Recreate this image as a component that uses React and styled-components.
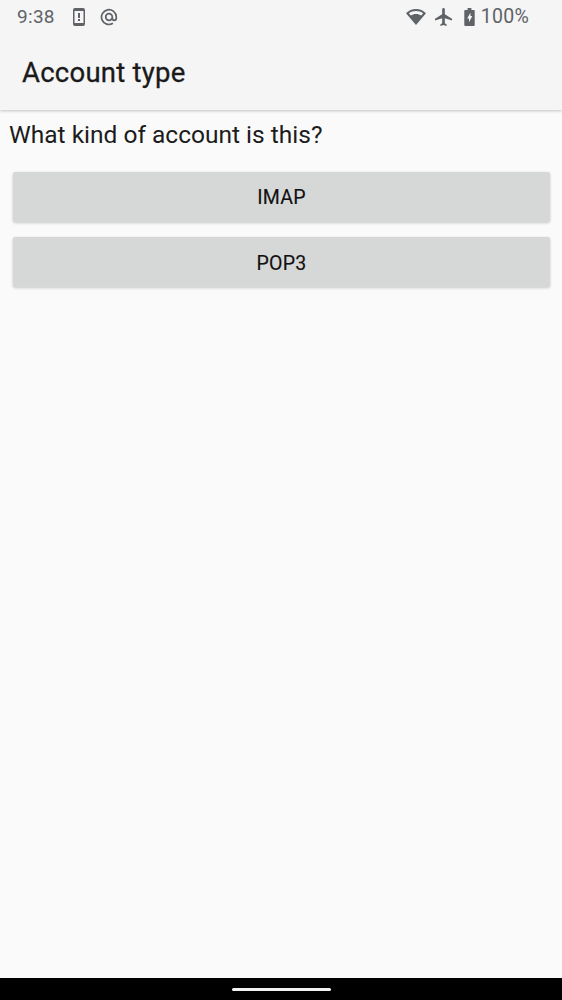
import React from 'react'
import styled, { createGlobalStyle } from 'styled-components'

const GlobalStyle = createGlobalStyle`
  html, body { margin: 0; padding: 0; background: #fafafa; }
  * { box-sizing: border-box; }
  body { font-family: Roboto, "Liberation Sans", sans-serif; }
`

const Phone = styled.div`
  width: 562px;
  height: 1000px;
  display: flex;
  flex-direction: column;
  background: #fafafa;
  overflow: hidden;
`

const Header = styled.header`
  height: 110px;
  flex: none;
  background: #f5f5f5;
  box-shadow: 0 1px 3px rgba(0, 0, 0, 0.22);
  position: relative;
`

const StatusBar = styled.div`
  height: 33px;
  display: flex;
  align-items: center;
  justify-content: space-between;
  padding: 0 33px 0 17px;
  color: #5f6368;
  font-size: 19px;
  letter-spacing: 0.3px;
`

const StatusGroup = styled.div`
  display: flex;
  align-items: center;
`

const Clock = styled.span`
  width: 55.5px;
  margin-top: -1px;
`

const Title = styled.h1`
  margin: 0;
  padding: 23px 0 0 22px;
  font-size: 27.5px;
  line-height: 34px;
  font-weight: 400;
  letter-spacing: 0.25px;
  -webkit-text-stroke: 0.3px #1a1a1a;
  color: #1a1a1a;
`

const Content = styled.main`
  flex: 1;
`

const Question = styled.p`
  margin: 0;
  padding: 10px 0 0 9px;
  font-size: 24.5px;
  line-height: 30px;
  font-weight: 400;
  color: #1c1c1c;
`

const Buttons = styled.div`
  display: flex;
  flex-direction: column;
  gap: 15.5px;
  padding: 21.5px 12px 0 13px;
`

const ActionButton = styled.button`
  height: 50px;
  border: 0;
  border-radius: 2px;
  background: #d6d7d7;
  box-shadow: 0 1px 3px rgba(0, 0, 0, 0.2);
  font-family: inherit;
  font-size: 19.5px;
  font-weight: 400;
  letter-spacing: 0.2px;
  -webkit-text-stroke: 0.15px #111;
  color: #111;
  padding: 2px 0 0;
`

const NavBar = styled.footer`
  height: 22px;
  flex: none;
  background: #000;
  display: flex;
  justify-content: center;
  padding-top: 10px;
`

const NavHandle = styled.div`
  width: 99px;
  height: 3px;
  border-radius: 2px;
  background: #f2f2f2;
`

const AlertPhoneIcon = styled.svg`
  width: 12px;
  height: 18px;
  fill: #5f6368;
`

const AtIcon = styled.svg`
  width: 18px;
  height: 18px;
  margin-left: 15px;
  fill: none;
  stroke: #5f6368;
  stroke-width: 1.7;
`

const RightIcon = styled.svg`
  width: ${p => p.$w}px;
  height: ${p => p.$h}px;
  margin-right: ${p => p.$gap}px;
  fill: #5f6368;
`

const Percent = styled.span`
  font-size: 19.5px;
`

export default function App() {
  return (
    <Phone>
      <GlobalStyle />
      <Header>
        <StatusBar>
          <StatusGroup>
            <Clock>9:38</Clock>
            <AlertPhoneIcon viewBox="0 0 12 18">
              <path fillRule="evenodd" d="M2 0h8a2 2 0 0 1 2 2v14a2 2 0 0 1-2 2H2a2 2 0 0 1-2-2V2a2 2 0 0 1 2-2zM1.500 3v12h9V3h-9zM5 5h2v5H5V5zm0 6h2v2H5v-2z" />
            </AlertPhoneIcon>
            <AtIcon viewBox="0 0 18 18">
              <path d="M12.300 9a3.300 3.300 0 1 1-6.600 0a3.300 3.300 0 0 1 6.600 0v1.300a2 2 0 0 0 4 0V9a7.400 7.400 0 1 0-3.400 6.300" />
            </AtIcon>
          </StatusGroup>
          <StatusGroup>
            <RightIcon $w={20} $h={16} $gap={9} viewBox="0 0 20 16">
              <path fillRule="evenodd" d="M10 16L0 4.200C2.600 1.600 6.100 0 10 0s7.400 1.600 10 4.200L10 16zM2.900 4.300l1.900 2.300C6.200 5.600 8 5 10 5s3.800.6 5.200 1.600l1.900-2.300C15.100 2.800 12.700 2 10 2S4.900 2.800 2.900 4.300z" />
            </RightIcon>
            <RightIcon $w={17} $h={18} $gap={12} viewBox="2 2 19 20">
              <path d="M21 16v-2l-8-5V3.500c0-.83-.67-1.500-1.500-1.500S10 2.670 10 3.500V9l-8 5v2l8-2.500V19l-2 1.500V22l3.500-1 3.500 1v-1.500L13 19v-5.500l8 2.500z" />
            </RightIcon>
            <RightIcon $w={11} $h={18} $gap={6} viewBox="0 0 11 19">
              <path fillRule="evenodd" d="M3.500 0h4v2H10a1 1 0 0 1 1 1v15a1 1 0 0 1-1 1H1a1 1 0 0 1-1-1V3a1 1 0 0 1 1-1h2.500V0zM6.500 5L3 11h2v4l3.500-6.500h-2V5z" />
            </RightIcon>
            <Percent>100%</Percent>
          </StatusGroup>
        </StatusBar>
        <Title>Account type</Title>
      </Header>
      <Content>
        <Question>What kind of account is this?</Question>
        <Buttons>
          <ActionButton>IMAP</ActionButton>
          <ActionButton>POP3</ActionButton>
        </Buttons>
      </Content>
      <NavBar>
        <NavHandle />
      </NavBar>
    </Phone>
  )
}
